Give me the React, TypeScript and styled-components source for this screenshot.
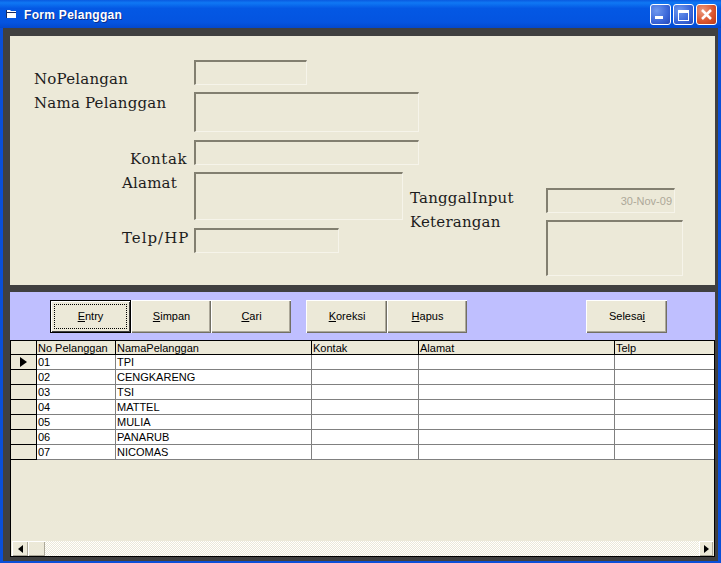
import styled, { createGlobalStyle } from "styled-components";

const GlobalStyle = createGlobalStyle`
  html, body {
    margin: 0;
    padding: 0;
    background: #0a4fd8;
  }
  #root {
    width: 721px;
    height: 563px;
    overflow: hidden;
  }
`;

const Window = styled.div`
  width: 721px;
  height: 563px;
  box-sizing: border-box;
  display: flex;
  flex-direction: column;
  background: #0a4fd8;
  padding: 0 3px 2px;
  font-family: "Liberation Sans", Arial, sans-serif;
`;

const TitleBar = styled.div`
  height: 28px;
  margin: 0 -3px;
  padding: 0 4px 0 6px;
  box-sizing: border-box;
  flex: none;
  display: flex;
  align-items: center;
  background: linear-gradient(180deg, #0a5ae0 0%, #0f78f4 10%, #0458e4 30%, #0454e0 80%, #0348cc 100%);
`;

const TitleText = styled.span`
  margin-left: 8px;
  padding-top: 2px;
  color: #fff;
  font-size: 12px;
  font-weight: 700;
  letter-spacing: 0.3px;
  text-shadow: 1px 1px 0 #0a2f90;
  flex: 1;
`;

const CaptionButton = styled.div<{ $close?: boolean }>`
  width: 21px;
  height: 21px;
  margin-left: 2px;
  box-sizing: border-box;
  border: 1px solid #fff;
  border-radius: 3px;
  background: ${(p) =>
    p.$close
      ? "radial-gradient(circle at 30% 30%, #ec9a7e, #d9532c 60%, #b83a18)"
      : "radial-gradient(circle at 30% 30%, #6f98ee, #3a66d8 60%, #2347b8)"};
  display: flex;
  align-items: center;
  justify-content: center;
`;

const Client = styled.div`
  flex: 1;
  min-height: 0;
  background: #404040;
  padding: 8px 3px 4px 7px;
  display: flex;
  flex-direction: column;
`;

const FormPanel = styled.div`
  height: 249px;
  flex: none;
  background: #ece9d8;
  display: flex;
`;

const LeftFields = styled.div`
  width: 400px;
  padding-top: 24px;
  display: grid;
  grid-template-rows: 32px 48px 32px 56px 25px;
  align-content: start;
`;

const RightFields = styled.div`
  padding-top: 152px;
  display: grid;
  grid-template-rows: 32px 56px;
  align-content: start;
`;

const FieldRow = styled.div`
  display: flex;
  align-items: flex-start;
`;

const LabelSlot = styled.div<{ $width: number; $indent: number }>`
  width: ${(p) => p.$width}px;
  box-sizing: border-box;
  flex: none;
  padding-left: ${(p) => p.$indent}px;
`;

const Label = styled.label<{ $top: number; $tracking?: number }>`
  display: block;
  margin-top: ${(p) => p.$top}px;
  font-family: "DejaVu Serif", "Liberation Serif", serif;
  font-size: 15px;
  line-height: 18px;
  letter-spacing: ${(p) => p.$tracking ?? 0.2}px;
  color: #1c1c1c;
  white-space: nowrap;
`;

const Sunken = styled.div<{ $w: number; $h: number }>`
  width: ${(p) => p.$w}px;
  height: ${(p) => p.$h}px;
  box-sizing: border-box;
  border-style: solid;
  border-width: 2px 1px 1px 2px;
  border-color: #827f70 #f6f4ea #f6f4ea #827f70;
  display: flex;
  align-items: center;
  justify-content: flex-end;
  padding-right: 2px;
  color: #aca899;
  font-size: 11px;
`;

const ButtonBar = styled.div`
  height: 48px;
  margin-top: 7px;
  flex: none;
  background: #bfbfff;
  padding: 8px 0 0 40px;
  box-sizing: border-box;
  display: flex;
  align-items: flex-start;
`;

const ButtonGroup = styled.div<{ $gap: number }>`
  display: flex;
  margin-right: ${(p) => p.$gap}px;
`;

const Button = styled.button<{ $wide?: boolean; $focused?: boolean }>`
  width: ${(p) => (p.$wide ? 81 : 80)}px;
  height: 33px;
  padding: 0 0 2px;
  box-sizing: border-box;
  position: relative;
  background: #ece9d8;
  border: 0;
  border-top: 1px solid #fff;
  border-left: 1px solid #fff;
  box-shadow: inset -1px -1px 0 #716f64, inset -2px -2px 0 #aca899;
  font-family: "Liberation Sans", Arial, sans-serif;
  font-size: 11px;
  color: #000;
  ${(p) =>
    p.$focused &&
    `
    border: 1px solid #000;
    box-shadow: inset 1px 1px 0 #fff, inset -1px -1px 0 #404040;
    &::after {
      content: "";
      position: absolute;
      inset: 3px;
      border: 1px dotted #000;
    }
  `}
`;

const Key = styled.span`
  text-decoration: underline;
`;

const GridArea = styled.div`
  flex: 1;
  min-height: 0;
  background: #ece9d8;
  box-sizing: border-box;
  border: 1px solid #000;
  display: flex;
  flex-direction: column;
`;

const DataGrid = styled.div`
  flex: 1;
  min-height: 0;
`;

const GridRow = styled.div<{ $header?: boolean }>`
  display: grid;
  grid-template-columns: 26px 79px 196px 107px 196px 99px;
  height: ${(p) => (p.$header ? 14 : 15)}px;
`;

const Indicator = styled.div`
  background: #ece9d8;
  box-sizing: border-box;
  border-right: 1px solid #000;
  border-bottom: 1px solid #000;
  display: flex;
  align-items: center;
  justify-content: center;
`;

const HeaderCell = styled.div`
  background: #ece9d8;
  box-sizing: border-box;
  border-right: 1px solid #000;
  border-bottom: 1px solid #000;
  padding-left: 1px;
  font-size: 11px;
  line-height: 14px;
  color: #000;
  white-space: nowrap;
  overflow: hidden;
  &:last-child {
    border-right: 0;
  }
`;

const Cell = styled.div`
  background: #fff;
  box-sizing: border-box;
  border-right: 1px solid #808080;
  border-bottom: 1px solid #808080;
  padding-left: 1px;
  font-size: 11px;
  line-height: 14px;
  color: #000;
  white-space: nowrap;
  overflow: hidden;
  &:last-child {
    border-right: 0;
  }
`;

const ScrollBar = styled.div`
  height: 15px;
  flex: none;
  margin: 0 1px;
  display: flex;
  background-color: #ece9d8;
  background-image: conic-gradient(#fff 25%, #ece9d8 0 50%, #fff 0 75%, #ece9d8 0);
  background-size: 2px 2px;
`;

const ScrollPart = styled.div<{ $w: number; $end?: boolean }>`
  width: ${(p) => p.$w}px;
  height: 15px;
  flex: none;
  margin-left: ${(p) => (p.$end ? "auto" : "0")};
  box-sizing: border-box;
  background: #ece9d8;
  border-top: 1px solid #fff;
  border-left: 1px solid #fff;
  box-shadow: inset -1px -1px 0 #aca899;
  display: flex;
  align-items: center;
  justify-content: center;
`;

const rows = [
  ["01", "TPI"],
  ["02", "CENGKARENG"],
  ["03", "TSI"],
  ["04", "MATTEL"],
  ["05", "MULIA"],
  ["06", "PANARUB"],
  ["07", "NICOMAS"],
];

const headers = ["No Pelanggan", "NamaPelanggan", "Kontak", "Alamat", "Telp"];

const App = () => {
  return (
    <Window>
      <GlobalStyle />
      <TitleBar>
        <svg width="10" height="10" viewBox="0 0 10 10">
          <path d="M0 1h4l1 1h5v7H1L0 8z" fill="#fff" />
          <path d="M0 1h1v8H0zM1 3h9v1H1z" fill="#1a2a60" />
        </svg>
        <TitleText>Form Pelanggan</TitleText>
        <CaptionButton>
          <svg width="19" height="19" viewBox="0 0 19 19">
            <rect x="4" y="11" width="8" height="3" fill="#fff" />
          </svg>
        </CaptionButton>
        <CaptionButton>
          <svg width="19" height="19" viewBox="0 0 19 19">
            <rect x="4.5" y="5.5" width="10" height="10" fill="none" stroke="#fff" />
            <rect x="4" y="5" width="11" height="3" fill="#fff" />
          </svg>
        </CaptionButton>
        <CaptionButton $close>
          <svg width="19" height="19" viewBox="0 0 19 19">
            <path d="M5 5l9 9M14 5l-9 9" stroke="#fff" strokeWidth="2.5" />
          </svg>
        </CaptionButton>
      </TitleBar>
      <Client>
        <FormPanel>
          <LeftFields>
            <FieldRow>
              <LabelSlot $width={184} $indent={24}><Label $top={10}>NoPelangan</Label></LabelSlot>
              <Sunken $w={113} $h={25} />
            </FieldRow>
            <FieldRow>
              <LabelSlot $width={184} $indent={24}><Label $top={2}>Nama Pelanggan</Label></LabelSlot>
              <Sunken $w={225} $h={40} />
            </FieldRow>
            <FieldRow>
              <LabelSlot $width={184} $indent={120}><Label $top={10} $tracking={0.6}>Kontak</Label></LabelSlot>
              <Sunken $w={225} $h={25} />
            </FieldRow>
            <FieldRow>
              <LabelSlot $width={184} $indent={112}><Label $top={2}>Alamat</Label></LabelSlot>
              <Sunken $w={209} $h={48} />
            </FieldRow>
            <FieldRow>
              <LabelSlot $width={184} $indent={112}><Label $top={1} $tracking={1}>Telp/HP</Label></LabelSlot>
              <Sunken $w={145} $h={25} />
            </FieldRow>
          </LeftFields>
          <RightFields>
            <FieldRow>
              <LabelSlot $width={136} $indent={0}><Label $top={1}>TanggalInput</Label></LabelSlot>
              <Sunken $w={129} $h={25}>30-Nov-09</Sunken>
            </FieldRow>
            <FieldRow>
              <LabelSlot $width={136} $indent={0}><Label $top={-7}>Keterangan</Label></LabelSlot>
              <Sunken $w={137} $h={56} />
            </FieldRow>
          </RightFields>
        </FormPanel>
        <ButtonBar>
          <ButtonGroup $gap={15}>
            <Button $wide $focused><Key>E</Key>ntry</Button>
            <Button><Key>S</Key>impan</Button>
            <Button><Key>C</Key>ari</Button>
          </ButtonGroup>
          <ButtonGroup $gap={119}>
            <Button $wide><Key>K</Key>oreksi</Button>
            <Button><Key>H</Key>apus</Button>
          </ButtonGroup>
          <Button $wide>Selesa<Key>i</Key></Button>
        </ButtonBar>
        <GridArea>
          <DataGrid>
            <GridRow $header>
              <Indicator />
              {headers.map((h) => (
                <HeaderCell key={h}>{h}</HeaderCell>
              ))}
            </GridRow>
            {rows.map(([no, name], i) => (
              <GridRow key={no}>
                <Indicator>
                  {i === 0 && (
                    <svg width="7" height="10" viewBox="0 0 7 10">
                      <path d="M0 0l7 5-7 5z" fill="#000" />
                    </svg>
                  )}
                </Indicator>
                <Cell>{no}</Cell>
                <Cell>{name}</Cell>
                <Cell />
                <Cell />
                <Cell />
              </GridRow>
            ))}
          </DataGrid>
          <ScrollBar>
            <ScrollPart $w={16}>
              <svg width="5" height="8" viewBox="0 0 5 8">
                <path d="M5 0L0 4l5 4z" fill="#000" />
              </svg>
            </ScrollPart>
            <ScrollPart $w={17} />
            <ScrollPart $w={14} $end>
              <svg width="5" height="8" viewBox="0 0 5 8">
                <path d="M0 0l5 4-5 4z" fill="#000" />
              </svg>
            </ScrollPart>
          </ScrollBar>
        </GridArea>
      </Client>
    </Window>
  );
};

export default App;
